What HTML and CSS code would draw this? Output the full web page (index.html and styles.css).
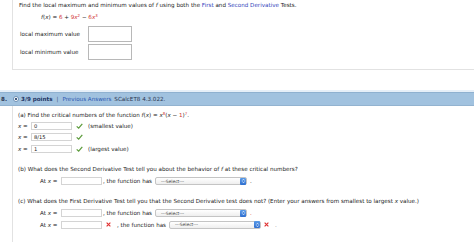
FILE: index.html
```html
<!DOCTYPE html>
<html>
<head>
<meta charset="utf-8">
<link rel="stylesheet" href="styles.css">
</head>
<body>
<div class="card">
  <p class="line">Find the local maximum and minimum values of <i>f</i> using both the <span class="link">First</span> and <span class="link">Second Derivative</span> Tests.</p>
  <p class="line eq"><i>f</i>(<i>x</i>) = <span class="red">6</span> + <span class="red">9<i>x</i><sup>2</sup></span> &minus; <span class="red">6<i>x</i><sup>3</sup></span></p>
  <div class="lrow"><span class="lbl">local maximum value</span><span class="box"></span></div>
  <div class="lrow"><span class="lbl">local minimum value</span><span class="box"></span></div>
</div>

<div class="qhead">
  <div class="bar">
    <span class="num">8.</span>
    <span class="dot"></span>
    <span class="pts">3/9 points</span>
    <span class="sep">|</span>
    <span class="prev">Previous Answers</span>
    <span class="src">SCalcET8 4.3.022.</span>
  </div>
</div>

<div class="qbody">
  <p class="line">(a) Find the critical numbers of the function <i>f</i>(<i>x</i>) = <i>x</i><sup class="red">8</sup>(<i>x</i> &minus; <span class="red">1</span>)<sup class="red">7</sup>.</p>
  <div class="arow"><span class="xl"><i>x</i> = </span><span class="inp">0</span><span class="check"><svg viewBox="0 0 10 8" width="7" height="6"><path d="M1 4.5 L3.8 7 L9 1" fill="none" stroke="#5c9b3b" stroke-width="1.8"/></svg></span><span class="note">(smallest value)</span></div>
  <div class="arow"><span class="xl"><i>x</i> = </span><span class="inp">8/15</span><span class="check"><svg viewBox="0 0 10 8" width="7" height="6"><path d="M1 4.5 L3.8 7 L9 1" fill="none" stroke="#5c9b3b" stroke-width="1.8"/></svg></span></div>
  <div class="arow"><span class="xl"><i>x</i> = </span><span class="inp">1</span><span class="check"><svg viewBox="0 0 10 8" width="7" height="6"><path d="M1 4.5 L3.8 7 L9 1" fill="none" stroke="#5c9b3b" stroke-width="1.8"/></svg></span><span class="note">(largest value)</span></div>

  <p class="line part">(b) What does the Second Derivative Test tell you about the behavior of <i>f</i> at these critical numbers?</p>
  <div class="srow"><span class="at">At <i>x</i> = </span><span class="inp wide"></span><span class="fh">, the function has</span><span class="sel"><span class="stxt">---Select---</span><span class="arr"><svg viewBox="0 0 6 7" width="5" height="6"><path d="M1.5 3 L3 1.3 L4.5 3 M1.5 4 L3 5.7 L4.5 4" fill="none" stroke="#fff" stroke-width="0.8"/></svg></span></span><span class="dotend">.</span></div>

  <p class="line part">(c) What does the First Derivative Test tell you that the Second Derivative test does not? (Enter your answers from smallest to largest <i>x</i> value.)</p>
  <div class="srow c"><span class="at">At <i>x</i> = </span><span class="inp wide"></span><span class="fh">, the function has</span><span class="sel"><span class="stxt">---Select---</span><span class="arr"><svg viewBox="0 0 6 7" width="5" height="6"><path d="M1.5 3 L3 1.3 L4.5 3 M1.5 4 L3 5.7 L4.5 4" fill="none" stroke="#fff" stroke-width="0.8"/></svg></span></span><span class="dotend red">.</span></div>
  <div class="srow c"><span class="at">At <i>x</i> = </span><span class="inp wide"></span><span class="xmark"><svg viewBox="0 0 8 8" width="5" height="5"><path d="M1 1 L7 7 M7 1 L1 7" stroke="#e03030" stroke-width="1.8"/></svg></span><span class="fh">, the function has</span><span class="sel"><span class="stxt">---Select---</span><span class="arr"><svg viewBox="0 0 6 7" width="5" height="6"><path d="M1.5 3 L3 1.3 L4.5 3 M1.5 4 L3 5.7 L4.5 4" fill="none" stroke="#fff" stroke-width="0.8"/></svg></span></span><span class="xmark x2"><svg viewBox="0 0 8 8" width="5" height="5"><path d="M1 1 L7 7 M7 1 L1 7" stroke="#e03030" stroke-width="1.8"/></svg></span><span class="dotend gray">.</span></div>
</div>
</body>
</html>
```

FILE: styles.css
```css
html, body {
  margin: 0;
  padding: 0;
  background: #fff;
}
body {
  font-family: "DejaVu Sans", Verdana, sans-serif;
  font-size: 5.6px;
  color: #222;
  width: 474px;
  height: 242px;
  overflow: hidden;
}
p { margin: 0; }
sup { font-size: 70%; line-height: 0; vertical-align: 0.5em; }
.red { color: #d03030; }
.link { color: #3344bb; }

.card {
  margin-left: 12px;
  border-left: 1px solid #e2e2e2;
  border-bottom: 1px solid #e2e2e2;
  padding: 0 0 9px 6px;
  display: flex;
  flex-direction: column;
  gap: 2px;
}
.line {
  height: 10px;
  line-height: 10px;
  white-space: nowrap;
}
.card .line.eq { margin-left: 22px; margin-bottom: 2px; }
.lrow {
  display: flex;
  align-items: center;
  height: 16px;
}
.lbl { width: 69px; padding-left: 1px; box-sizing: border-box; }
.box {
  width: 44px;
  height: 16px;
  box-sizing: border-box;
  border: 1px solid #b8b8b8;
  background: #fff;
}

.qhead {
  margin-top: 20px;
  border-top: 2px solid #e6eff8;
}
.bar {
  height: 14px;
  box-sizing: border-box;
  background: #a1c2df;
  border-top: 1px solid #8fb1d0;
  border-bottom: 1px solid #93b3d0;
  display: flex;
  align-items: center;
  white-space: nowrap;
}
.num { font-weight: bold; margin-left: 1px; width: 12px; color: #2a3550; }
.dot {
  width: 4px;
  height: 4px;
  border-radius: 50%;
  background: #fff;
  border: 0.6px solid #6a8fb5;
  position: relative;
  margin-right: 2px;
}
.dot::after {
  content: "";
  position: absolute;
  left: 1.3px; top: 1.3px;
  width: 1.4px; height: 1.4px;
  border-radius: 50%;
  background: #1d3a66;
}
.pts { font-weight: bold; color: #1d3463; }
.sep { margin: 0 4px; color: #3a5680; }
.prev { color: #2a55b0; margin-right: 3px; }
.src { color: #2a3550; }

.qbody {
  margin-left: 12px;
  border-left: 1px solid #e2e2e2;
  padding: 4px 0 20px 5px;
}
.arow {
  height: 11.5px;
  display: flex;
  align-items: center;
  white-space: nowrap;
}
.xl { width: 13px; }
.inp {
  width: 41px;
  height: 8px;
  box-sizing: border-box;
  border: 1px solid #d4d4d4;
  background: #fff;
  padding-left: 2px;
  line-height: 6px;
  font-size: 5.2px;
}
.check { margin-left: 4px; width: 12px; display: flex; align-items: center; }
.part { margin-top: 9.5px; }
.srow {
  height: 11px;
  display: flex;
  align-items: center;
  white-space: nowrap;
  padding-left: 22px;
  margin-top: 1.5px;
}
.srow.c { height: 11.5px; margin-top: 0; }
.part + .srow.c { margin-top: 1.5px; }
.at { width: 21px; }
.fh { margin-left: 1px; margin-right: 3px; }
.sel {
  width: 92px;
  height: 8px;
  box-sizing: border-box;
  border: 0.6px solid #c4c4c4;
  border-radius: 2px;
  background: linear-gradient(#ffffff, #eeeeee);
  display: flex;
  align-items: center;
  justify-content: space-between;
  padding-left: 5px;
}
.stxt { font-size: 4.4px; color: #444; }
.arr {
  width: 6px;
  height: 7px;
  background: linear-gradient(#5a9be8, #2f6fd0);
  border-radius: 1px;
  display: flex;
  align-items: center;
  justify-content: center;
}
.dotend { margin-left: 3px; }
.xmark { display: flex; align-items: center; margin-left: 4px; width: 10px; }
.xmark.x2 { margin-left: 3px; width: 8px; }
.gray { color: #888; margin-left: 3px; }
```
